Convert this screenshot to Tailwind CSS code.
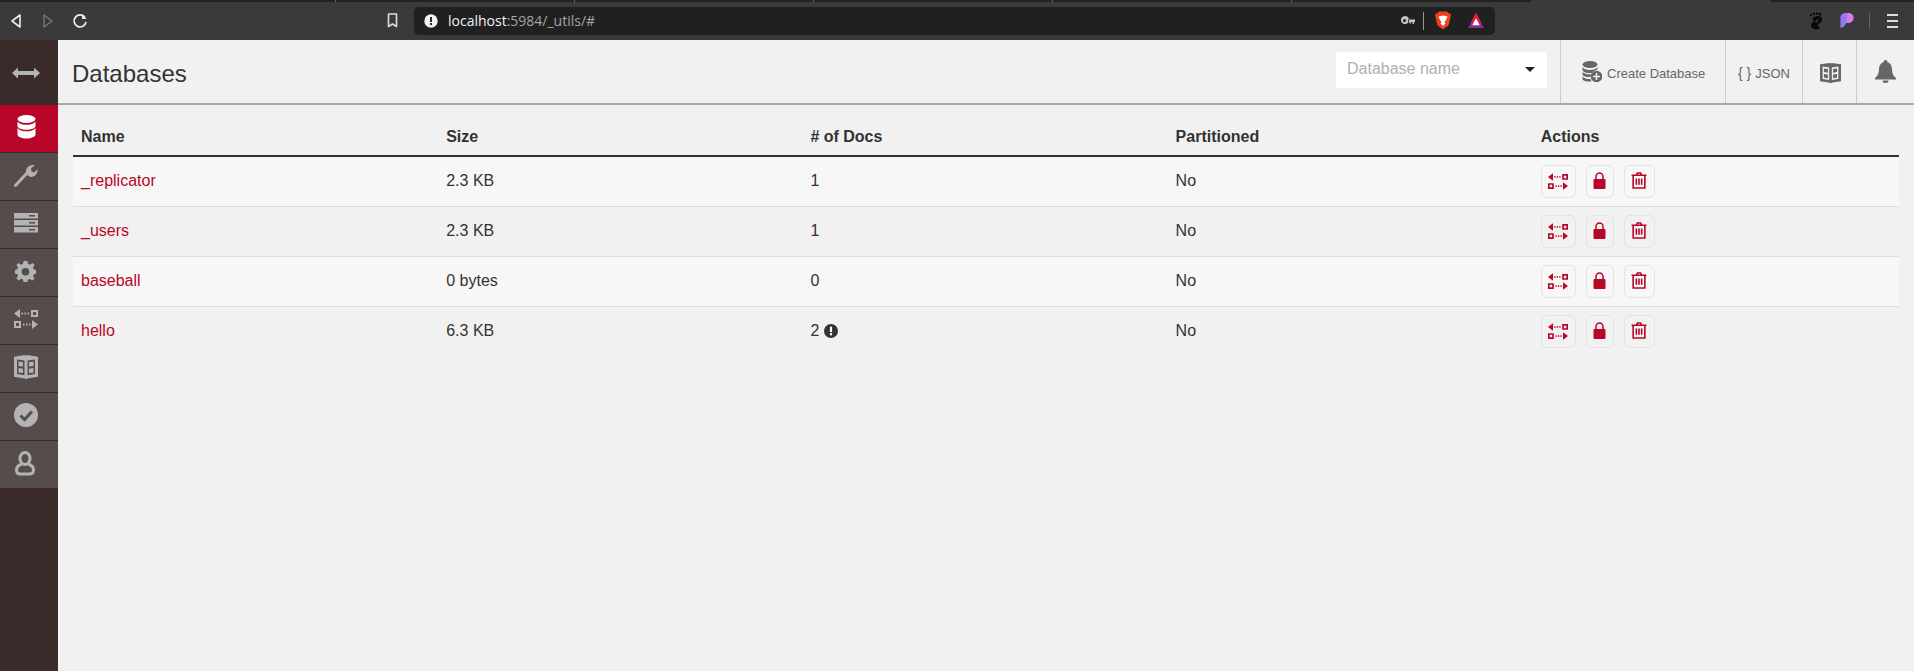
<!DOCTYPE html>
<html><head><meta charset="utf-8"><script src="https://cdn.jsdelivr.net/npm/@tailwindcss/browser@4"></script></head>
<body class="w-[1914px] h-[671px] overflow-hidden bg-[#f1f1f1] font-['Liberation_Sans',sans-serif] text-[#333]">
<div class="flex flex-col h-[671px]">
  <!-- browser chrome -->
  <div class="h-[40px] bg-[#3a3a3a] flex flex-col shrink-0">
    <div class="h-[2px] flex bg-[#222]">
      <div class="w-[336px] border-r border-[#666]"></div><div class="w-[239px] border-r border-[#666]"></div><div class="w-[239px] border-r border-[#666]"></div><div class="w-[239px] border-r border-[#666]"></div><div class="w-[239px] border-r border-[#666]"></div><div class="w-[239px]"></div><div class="w-[240px] bg-[#3a3a3a]"></div><div class="flex-1"></div>
    </div>
    <div class="flex-1 flex items-center pb-[1px]">
      <svg class="ml-[10px] w-[12px] h-[16px]" viewBox="0 0 12 16" fill="none" stroke="#eee" stroke-width="1.6" stroke-linejoin="round"><path d="M10 2 2 8l8 6z"/></svg>
      <svg class="ml-[20px] w-[12px] h-[16px]" viewBox="0 0 12 16" fill="none" stroke="#777" stroke-width="1.4" stroke-linejoin="round"><path d="M2 2l8 6-8 6z"/></svg>
      <svg class="ml-[18px] w-[16px] h-[16px]" viewBox="0 0 16 16" fill="none" stroke="#eee" stroke-width="1.700"><path d="M13 4.500A6 6 0 1 0 14 9"/><path d="M10 1v5h4.500z" fill="#eee" stroke="none"/></svg>
      <svg class="ml-[299px] w-[11px] h-[15px]" viewBox="0 0 11 15" fill="none" stroke="#ddd" stroke-width="1.600" stroke-linejoin="round"><path d="M1.500 1h8v12.500l-4-2.500-4 2.500z"/></svg>
      <div class="ml-[16px] w-[1081px] h-[28px] bg-[#202020] rounded-[5px] flex items-center pl-[10px] pr-[10px]">
        <svg class="w-[14px] h-[14px] shrink-0" viewBox="0 0 13 13"><circle cx="6.500" cy="6.500" r="6.200" fill="#f2f2f2"/><rect x="5.600" y="2.800" width="1.800" height="4.600" fill="#202020"/><rect x="5.600" y="8.400" width="1.800" height="1.800" fill="#202020"/></svg>
        <span class="ml-[10px] -mt-px text-[14px] text-[#f0f0f0] font-['Open_Sans',sans-serif]">localhost<span class="text-[#a5a5a5]">:5984/_utils/#</span></span>
        <div class="flex-1"></div>
        <svg class="w-[14px] h-[10px]" viewBox="0 0 14 10" fill="#c4c4c4"><path d="M4 0a4 4 0 1 1-3.900 5 4 4 0 0 1 3.900-5zM3.500 3a1.500 1.500 0 1 0 0 3 1.500 1.500 0 0 0 0-3zM7 3.500h7v2.500h-1v2h-1.500V6H10v1.500H8.500V6H7z" fill-rule="evenodd"/></svg>
        <div class="ml-[8px] w-px h-[18px] bg-[#999]"></div>
        <svg class="ml-[11px] w-[16px] h-[19px]" viewBox="0 0 16 18"><path d="M4 0h8l1.500 1.500L16 3l-1 5-1.500 6L8 18l-5.500-4L1 8 0 3l2.500-1.500z" fill="#f0401e"/><path d="M3.500 5 8 4l4.500 1L11 8.500l-1.500 2 1 1.500L8 14.500 5.500 12l1-1.500-1.500-2z" fill="#fff"/></svg>
        <svg class="ml-[16px] w-[18px] h-[16px]" viewBox="0 0 15 15"><path d="M7.500 0 15 14H0z" fill="#8e2a8e"/><path d="M7.500 0 12 8.500H3z" fill="#e8202e"/><path d="M7.500 5 11 11.500H4z" fill="#fff"/></svg>
      </div>
      <svg class="ml-[314px] w-[14px] h-[18px]" viewBox="0 0 14 18" fill="#0a0a0a"><circle cx="2" cy="3" r="1.200"/><circle cx="5" cy="1.800" r="1.200"/><circle cx="8" cy="1.500" r="1.200"/><circle cx="11" cy="2.200" r="1.400"/><path d="M12 5c2 2 1 5-1 6-2 1-3 2-1 3.500 1 .8 1 2.500-1.500 3C5 18 2 16 2 13c0-2 2-3 3-4C3 8 3 6 5 5c2-1 5-1.500 7 0zM9 7.500a3 3 0 0 0-3 3l3-1z" fill-rule="evenodd"/></svg>
      <svg class="ml-[17px] w-[14px] h-[16px]" viewBox="0 0 13 16"><path d="M0 3 3 0h5a5 5 0 0 1 0 10H6l-3 4-3 1z" fill="#8f7cf0"/><path d="M7 0h1a5 5 0 0 1 0 10H6z" fill="#d97be8"/></svg>
      <div class="ml-[15px] w-px h-[16px] bg-[#666]"></div>
      <div class="ml-[17px] w-[11px] flex flex-col gap-[4px]"><div class="h-[2px] bg-[#ddd]"></div><div class="h-[2px] bg-[#ddd]"></div><div class="h-[2px] bg-[#ddd]"></div></div>
    </div>
  </div>
  <div class="flex flex-1 min-h-0">
    <!-- sidebar -->
    <div class="w-[58px] shrink-0 bg-[#3a2a2a] flex flex-col">
      <div class="h-[65px] flex items-center justify-center pr-[6px]">
        <svg class="w-[28px] h-[12px]" viewBox="0 0 28 12" fill="#b3b3b3"><path d="M0 6 6 .5v3.500h16V.5l6 5.500-6 5.500V8H6v3.500z"/></svg>
      </div>
      <div class="h-[47px] bg-[#b80628] flex items-center justify-center pr-[6px] pb-[3px]">
        <svg class="w-[19px] h-[24px]" viewBox="0 0 19 24" fill="#fff"><ellipse cx="9.500" cy="4" rx="9" ry="4"/><path d="M.5 6.500c1.500 2.500 5 3.300 9 3.300s7.500-.8 9-3.300V11c0 2-4 3.800-9 3.800S.5 13 .5 11z"/><path d="M.5 13c1.500 2.500 5 3.300 9 3.300s7.500-.8 9-3.300v6.500c0 2.300-4 4-9 4s-9-1.700-9-4z"/></svg>
      </div>
      <div class="h-[48px] bg-[#574c4c] border-t border-[#3a2a2a] flex items-center justify-center pr-[6px] pb-[3px]">
        <svg class="w-[26px] h-[26px]" viewBox="0 0 26 26" fill="none" stroke="#b3b3b3"><path d="M2.500 23.500 14 11" stroke-width="3" stroke-linecap="round"/><path d="M13.500 12.500c-2-5 1.500-10.500 8.500-9.500l-4 3.500.5 3 2.500 1 3.500-3.500c.5 6-4.500 9-8 7.500z" fill="#b3b3b3" stroke="none"/></svg>
      </div>
      <div class="h-[48px] bg-[#574c4c] border-t border-[#3a2a2a] flex items-center justify-center pr-[6px] pb-[4px]">
        <svg class="w-[24px] h-[20px]" viewBox="0 0 24 20" fill="#b3b3b3"><path d="M0 0h24v5.500H0zM15 2v1.500h6V2z" fill-rule="evenodd"/><path d="M0 7h24v5.500H0zM15 9v1.500h6V9z" fill-rule="evenodd"/><path d="M0 14h24v5.500H0zM15 16v1.500h6V16z" fill-rule="evenodd"/></svg>
      </div>
      <div class="h-[48px] bg-[#574c4c] border-t border-[#3a2a2a] flex items-center justify-center pr-[8px] pb-[3px]">
        <svg class="w-[21px] h-[21px]" viewBox="0 0 22 22" fill="#b3b3b3"><path fill-rule="evenodd" d="M9 0h4l.6 3 2 .9L18.300 2l2.200 2.200-1.700 2.500.9 2 2.300.6v4l-2.300.6-.9 2 1.700 2.400-2.200 2.200-2.700-1.700-2 .9L13 22H9l-.6-2.500-2-.9L3.700 20.300 1.500 18.100l1.700-2.400-.9-2L0 13.300v-4l2.300-.6.900-2L1.500 4.200 3.700 2l2.700 1.900 2-.9zM11 7.300a4 4 0 1 0 0 8 4 4 0 0 0 0-8z"/></svg>
      </div>
      <div class="h-[48px] bg-[#574c4c] border-t border-[#3a2a2a] flex items-center justify-center pr-[6px] pb-[3px]">
        <svg class="w-[24px] h-[20px]" viewBox="0 0 24 20" fill="#b3b3b3"><path d="M0 4.500 6 0v9z"/><rect x="7.500" y="3.500" width="1.500" height="2"/><rect x="10.500" y="3.500" width="1.500" height="2"/><rect x="13.500" y="3.500" width="1.500" height="2"/><path fill-rule="evenodd" d="M17 1h7v7h-7zM19 3v3h3V3z"/><path fill-rule="evenodd" d="M0 12h7v7H0zM2 14v3h3v-3z"/><rect x="9" y="14.500" width="1.500" height="2"/><rect x="12" y="14.500" width="1.500" height="2"/><rect x="15" y="14.500" width="1.500" height="2"/><path d="M18 11l6 4.500-6 4.500z"/></svg>
      </div>
      <div class="h-[48px] bg-[#574c4c] border-t border-[#3a2a2a] flex items-center justify-center pr-[6px] pb-[4px]">
        <svg class="w-[24px] h-[26px]" viewBox="0 0 24 24" preserveAspectRatio="none" fill="#b3b3b3"><path fill-rule="evenodd" d="M0 2.500 11 1l1 .8 1-.8 11 1.500V21l-11 1.500-1 1-1-1L0 21zM3 5v13.500l7.500 1V6zM21 5l-7.500 1v13.500l7.500-1z"/><path d="M4.500 7l4.500.6v4l-4.500-.6zM4.500 13l4.500.6v4l-4.500-.6zM19.500 7 15 7.600v4l4.500-.6zM19.500 13 15 13.600v4l4.500-.6z"/></svg>
      </div>
      <div class="h-[48px] bg-[#574c4c] border-t border-[#3a2a2a] flex items-center justify-center pr-[6px] pb-[3px]">
        <svg class="w-[24px] h-[24px]" viewBox="0 0 24 24"><circle cx="12" cy="12" r="12" fill="#b3b3b3"/><path d="M6.500 12.500 10.500 16.500 18 8.500" fill="none" stroke="#574c4c" stroke-width="3"/></svg>
      </div>
      <div class="h-[48px] bg-[#574c4c] border-t border-[#3a2a2a] flex items-center justify-center pr-[8px] pb-[3px]">
        <svg class="w-[20px] h-[25px]" viewBox="0 0 20 25" fill="none" stroke="#b3b3b3" stroke-width="3"><ellipse cx="10" cy="7.500" rx="5" ry="6"/><path d="M6.500 13C3 14.500 1.500 16.500 1.500 19c0 2.500 1.500 4 4 4h9c2.500 0 4-1.500 4-4 0-2.500-1.500-4.500-5-6"/></svg>
      </div>
    </div>
    <!-- main -->
    <div class="flex-1 flex flex-col min-w-0">
      <div class="h-[65px] shrink-0 flex items-stretch border-b-2 border-[#a8a8a8]">
        <h1 class="ml-[14px] mt-[19px] text-[24px] leading-[30px] text-[#333]">Databases</h1>
        <div class="flex-1"></div>
        <div class="mt-[12px] w-[211px] h-[36px] bg-white flex items-start pl-[11px] pr-[12px]">
          <span class="mt-[8px] text-[16px] leading-[18px] text-[#b0b0b0]">Database name</span>
          <div class="flex-1"></div>
          <div class="mt-[15px] border-x-[5px] border-x-transparent border-t-[5px] border-t-[#222]"></div>
        </div>
        <div class="ml-[13px] w-[166px] border-x border-[#ccc] flex items-center pl-[21px] gap-[5px] text-[13px] text-[#666]">
          <svg class="w-[20px] h-[22px] mt-[1px]" viewBox="0 0 20 22" fill="#666"><ellipse cx="8" cy="3.500" rx="7.500" ry="3.500"/><path d="M.5 6c1 2 4 3 7.500 3s6.500-1 7.500-3v2.500C13 9.500 11 10.500 10 12c-3 .3-9 0-9.500-3z"/><path d="M.5 11c1.500 2 5 2.500 8.500 2.300l-.5 2.700C5 16 1 15.500.5 13.500zM.5 15.500C2 17.500 5 18 8.500 18l1 2.500C5 20.800 1 20 .5 18z"/><circle cx="14.500" cy="15.500" r="5.800"/><path d="M14.500 12v7M11 15.500h7" stroke="#f1f1f1" stroke-width="1.500"/></svg>
          <span class="mt-[4px]">Create Database</span>
        </div>
        <div class="w-[77px] border-r border-[#ccc] flex items-center pl-[12px] text-[13px] text-[#666] gap-[4px]"><span class="mt-[4px] text-[14px]">{ }</span><span class="mt-[4px]">JSON</span></div>
        <div class="w-[54px] border-r border-[#ccc] flex items-center justify-center">
          <svg class="w-[21px] h-[22px] mt-[2px] ml-[2px]" viewBox="0 0 24 24" preserveAspectRatio="none" fill="#666"><path fill-rule="evenodd" d="M0 2.500 11 1l1 .8 1-.8 11 1.500V21l-11 1.500-1 1-1-1L0 21zM3 5v13.500l7.500 1V6zM21 5l-7.500 1v13.500l7.500-1z"/><path d="M4.500 7l4.500.6v4l-4.500-.6zM4.500 13l4.500.6v4l-4.500-.6zM19.500 7 15 7.600v4l4.500-.6zM19.500 13 15 13.600v4l4.500-.6z"/></svg>
        </div>
        <div class="w-[57px] flex items-center justify-center">
          <svg class="w-[21px] h-[23px]" viewBox="0 0 21 23" fill="#666"><circle cx="10.500" cy="2" r="2"/><path d="M10.500 2C15 2 17 5.500 17 9.500c0 4 1.500 6.500 4 8.500v1.500H0V18c2.500-2 4-4.500 4-8.500C4 5.500 6 2 10.500 2z"/><path d="M7.500 20.500h6a3 2.500 0 0 1-6 0z"/></svg>
        </div>
      </div>
      <!-- table -->
      <div class="ml-[15px] mr-[15px] text-[16px] leading-[20px]">
        <div class="grid grid-cols-5 h-[52px] border-b-2 border-[#333] font-bold pt-[22px]">
          <div class="pl-[8px]">Name</div><div class="pl-[8px]">Size</div><div class="pl-[7px]"># of Docs</div><div class="pl-[7px]">Partitioned</div><div class="pl-[7px]">Actions</div>
        </div>
        <div class="grid grid-cols-5 h-[50px] bg-[#f7f7f7] border-b border-[#ddd] pt-[14px]">
          <div class="pl-[8px] text-[#b80628]">_replicator</div><div class="pl-[8px]">2.3 KB</div><div class="pl-[7px]">1</div><div class="pl-[7px]">No</div>
          <div class="pl-[7px] -mt-[6px] flex gap-[10px] items-start">
            <div class="w-[35px] h-[33px] border border-[#e3e3e3] rounded-[6px] flex items-center justify-center"><svg class="w-[20px] h-[17px]" viewBox="0 0 24 20" fill="#b80628"><path d="M0 4.500 6 0v9z"/><rect x="7.500" y="3.500" width="1.500" height="2"/><rect x="10.500" y="3.500" width="1.500" height="2"/><rect x="13.500" y="3.500" width="1.500" height="2"/><path fill-rule="evenodd" d="M17 1h7v7h-7zM19 3v3h3V3z"/><path fill-rule="evenodd" d="M0 12h7v7H0zM2 14v3h3v-3z"/><rect x="9" y="14.500" width="1.500" height="2"/><rect x="12" y="14.500" width="1.500" height="2"/><rect x="15" y="14.500" width="1.500" height="2"/><path d="M18 11l6 4.500-6 4.500z"/></svg></div>
            <div class="w-[28px] h-[33px] border border-[#e3e3e3] rounded-[6px] flex items-center justify-center"><svg class="w-[13px] h-[17px] -mt-[2px]" viewBox="0 0 13 17" fill="#b80628"><path d="M3 8V4.500a3.500 3.500 0 0 1 7 0V8" fill="none" stroke="#b80628" stroke-width="1.500"/><rect x="0.500" y="7" width="12" height="10" rx="1"/></svg></div>
            <div class="w-[31px] h-[33px] border border-[#e3e3e3] rounded-[6px] flex items-center justify-center"><svg class="w-[16px] h-[17px] -mt-[2px]" viewBox="0 0 15 16" fill="none" stroke="#b80628" stroke-width="1.500"><path d="M.5 3h14M5 3l1-2h3l1 2M2 3v12h11V3"/><path d="M5 6v6M7.500 6v6M10 6v6" stroke-width="1.500"/></svg></div>
          </div>
        </div>
        <div class="grid grid-cols-5 h-[50px] border-b border-[#ddd] pt-[14px]">
          <div class="pl-[8px] text-[#b80628]">_users</div><div class="pl-[8px]">2.3 KB</div><div class="pl-[7px]">1</div><div class="pl-[7px]">No</div>
          <div class="pl-[7px] -mt-[6px] flex gap-[10px] items-start">
            <div class="w-[35px] h-[33px] border border-[#e3e3e3] rounded-[6px] flex items-center justify-center"><svg class="w-[20px] h-[17px]" viewBox="0 0 24 20" fill="#b80628"><path d="M0 4.500 6 0v9z"/><rect x="7.500" y="3.500" width="1.500" height="2"/><rect x="10.500" y="3.500" width="1.500" height="2"/><rect x="13.500" y="3.500" width="1.500" height="2"/><path fill-rule="evenodd" d="M17 1h7v7h-7zM19 3v3h3V3z"/><path fill-rule="evenodd" d="M0 12h7v7H0zM2 14v3h3v-3z"/><rect x="9" y="14.500" width="1.500" height="2"/><rect x="12" y="14.500" width="1.500" height="2"/><rect x="15" y="14.500" width="1.500" height="2"/><path d="M18 11l6 4.500-6 4.500z"/></svg></div>
            <div class="w-[28px] h-[33px] border border-[#e3e3e3] rounded-[6px] flex items-center justify-center"><svg class="w-[13px] h-[17px] -mt-[2px]" viewBox="0 0 13 17" fill="#b80628"><path d="M3 8V4.500a3.500 3.500 0 0 1 7 0V8" fill="none" stroke="#b80628" stroke-width="1.500"/><rect x="0.500" y="7" width="12" height="10" rx="1"/></svg></div>
            <div class="w-[31px] h-[33px] border border-[#e3e3e3] rounded-[6px] flex items-center justify-center"><svg class="w-[16px] h-[17px] -mt-[2px]" viewBox="0 0 15 16" fill="none" stroke="#b80628" stroke-width="1.500"><path d="M.5 3h14M5 3l1-2h3l1 2M2 3v12h11V3"/><path d="M5 6v6M7.500 6v6M10 6v6" stroke-width="1.500"/></svg></div>
          </div>
        </div>
        <div class="grid grid-cols-5 h-[50px] bg-[#f7f7f7] border-b border-[#ddd] pt-[14px]">
          <div class="pl-[8px] text-[#b80628]">baseball</div><div class="pl-[8px]">0 bytes</div><div class="pl-[7px]">0</div><div class="pl-[7px]">No</div>
          <div class="pl-[7px] -mt-[6px] flex gap-[10px] items-start">
            <div class="w-[35px] h-[33px] border border-[#e3e3e3] rounded-[6px] flex items-center justify-center"><svg class="w-[20px] h-[17px]" viewBox="0 0 24 20" fill="#b80628"><path d="M0 4.500 6 0v9z"/><rect x="7.500" y="3.500" width="1.500" height="2"/><rect x="10.500" y="3.500" width="1.500" height="2"/><rect x="13.500" y="3.500" width="1.500" height="2"/><path fill-rule="evenodd" d="M17 1h7v7h-7zM19 3v3h3V3z"/><path fill-rule="evenodd" d="M0 12h7v7H0zM2 14v3h3v-3z"/><rect x="9" y="14.500" width="1.500" height="2"/><rect x="12" y="14.500" width="1.500" height="2"/><rect x="15" y="14.500" width="1.500" height="2"/><path d="M18 11l6 4.500-6 4.500z"/></svg></div>
            <div class="w-[28px] h-[33px] border border-[#e3e3e3] rounded-[6px] flex items-center justify-center"><svg class="w-[13px] h-[17px] -mt-[2px]" viewBox="0 0 13 17" fill="#b80628"><path d="M3 8V4.500a3.500 3.500 0 0 1 7 0V8" fill="none" stroke="#b80628" stroke-width="1.500"/><rect x="0.500" y="7" width="12" height="10" rx="1"/></svg></div>
            <div class="w-[31px] h-[33px] border border-[#e3e3e3] rounded-[6px] flex items-center justify-center"><svg class="w-[16px] h-[17px] -mt-[2px]" viewBox="0 0 15 16" fill="none" stroke="#b80628" stroke-width="1.500"><path d="M.5 3h14M5 3l1-2h3l1 2M2 3v12h11V3"/><path d="M5 6v6M7.500 6v6M10 6v6" stroke-width="1.500"/></svg></div>
          </div>
        </div>
        <div class="grid grid-cols-5 h-[50px] pt-[14px]">
          <div class="pl-[8px] text-[#b80628]">hello</div><div class="pl-[8px]">6.3 KB</div>
          <div class="pl-[7px] flex items-center gap-[5px] h-[20px]"><span>2</span><svg class="w-[14px] h-[14px]" viewBox="0 0 13 13"><circle cx="6.500" cy="6.500" r="6.500" fill="#333"/><rect x="5.500" y="2.500" width="2" height="5" fill="#fff"/><rect x="5.500" y="8.500" width="2" height="2" fill="#fff"/></svg></div>
          <div class="pl-[7px]">No</div>
          <div class="pl-[7px] -mt-[6px] flex gap-[10px] items-start">
            <div class="w-[35px] h-[33px] border border-[#e3e3e3] rounded-[6px] flex items-center justify-center"><svg class="w-[20px] h-[17px]" viewBox="0 0 24 20" fill="#b80628"><path d="M0 4.500 6 0v9z"/><rect x="7.500" y="3.500" width="1.500" height="2"/><rect x="10.500" y="3.500" width="1.500" height="2"/><rect x="13.500" y="3.500" width="1.500" height="2"/><path fill-rule="evenodd" d="M17 1h7v7h-7zM19 3v3h3V3z"/><path fill-rule="evenodd" d="M0 12h7v7H0zM2 14v3h3v-3z"/><rect x="9" y="14.500" width="1.500" height="2"/><rect x="12" y="14.500" width="1.500" height="2"/><rect x="15" y="14.500" width="1.500" height="2"/><path d="M18 11l6 4.500-6 4.500z"/></svg></div>
            <div class="w-[28px] h-[33px] border border-[#e3e3e3] rounded-[6px] flex items-center justify-center"><svg class="w-[13px] h-[17px] -mt-[2px]" viewBox="0 0 13 17" fill="#b80628"><path d="M3 8V4.500a3.500 3.500 0 0 1 7 0V8" fill="none" stroke="#b80628" stroke-width="1.500"/><rect x="0.500" y="7" width="12" height="10" rx="1"/></svg></div>
            <div class="w-[31px] h-[33px] border border-[#e3e3e3] rounded-[6px] flex items-center justify-center"><svg class="w-[16px] h-[17px] -mt-[2px]" viewBox="0 0 15 16" fill="none" stroke="#b80628" stroke-width="1.500"><path d="M.5 3h14M5 3l1-2h3l1 2M2 3v12h11V3"/><path d="M5 6v6M7.500 6v6M10 6v6" stroke-width="1.500"/></svg></div>
          </div>
        </div>
      </div>
    </div>
  </div>
</div>
</body></html>
